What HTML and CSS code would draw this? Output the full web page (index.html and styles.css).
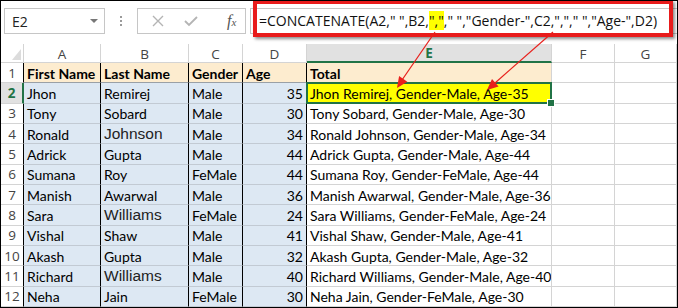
FILE: index.html
```html
<!DOCTYPE html>
<html lang="en">
<head>
    <meta charset="UTF-8">
    <title>CONCATENATE example</title>
    <link rel="stylesheet" href="styles.css">
</head>
<body>
    <div class="window">
        <div class="formula-bar">
            <div class="name-box">
                <span>E2</span>
                <span class="caret"></span>
            </div>
            <div class="grip"><i></i><i></i><i></i></div>
            <div class="fx-box">
                <svg class="ico" width="12" height="12" viewBox="0 0 12 12"><path d="M1 1 L11 11 M11 1 L1 11" stroke="#b4b4b4" stroke-width="1.4" fill="none"/></svg>
                <svg class="ico" width="14" height="12" viewBox="0 0 14 12"><path d="M1 6 L5 10 L13 2" stroke="#b4b4b4" stroke-width="1.8" fill="none"/></svg>
                <span class="fx">f<sub>x</sub></span>
            </div>
            <div class="formula-input">=CONCATENATE(A2," ",B2,<mark>","</mark>," ","Gender-",C2,","," ","Age-",D2)</div>
        </div>

        <div class="sheet">
            <div class="corner"></div>
            <div class="hd">A</div>
            <div class="hd">B</div>
            <div class="hd">C</div>
            <div class="hd">D</div>
            <div class="hd sel">E</div>
            <div class="hd">F</div>
            <div class="hd">G</div>

            <div class="rh">1</div>
            <div class="c h1">First Name</div>
            <div class="c h1">Last Name</div>
            <div class="c h1">Gender</div>
            <div class="c h1">Age</div>
            <div class="t h1">Total</div>
            <div class="e"></div>
            <div class="e"></div>

            <div class="rh sel">2</div>
            <div class="c">Jhon</div>
            <div class="c">Remirej</div>
            <div class="c">Male</div>
            <div class="c num">35</div>
            <div class="t active">Jhon Remirej, Gender-Male, Age-35</div>
            <div class="e"></div>
            <div class="e"></div>

            <div class="rh">3</div>
            <div class="c">Tony</div>
            <div class="c">Sobard</div>
            <div class="c">Male</div>
            <div class="c num">30</div>
            <div class="t">Tony Sobard, Gender-Male, Age-30</div>
            <div class="e"></div>
            <div class="e"></div>

            <div class="rh">4</div>
            <div class="c">Ronald</div>
            <div class="c arial">Johnson</div>
            <div class="c">Male</div>
            <div class="c num">34</div>
            <div class="t">Ronald Johnson, Gender-Male, Age-34</div>
            <div class="e"></div>
            <div class="e"></div>

            <div class="rh">5</div>
            <div class="c">Adrick</div>
            <div class="c">Gupta</div>
            <div class="c">Male</div>
            <div class="c num">44</div>
            <div class="t">Adrick Gupta, Gender-Male, Age-44</div>
            <div class="e"></div>
            <div class="e"></div>

            <div class="rh">6</div>
            <div class="c">Sumana</div>
            <div class="c">Roy</div>
            <div class="c">FeMale</div>
            <div class="c num">44</div>
            <div class="t">Sumana Roy, Gender-FeMale, Age-44</div>
            <div class="e"></div>
            <div class="e"></div>

            <div class="rh">7</div>
            <div class="c">Manish</div>
            <div class="c">Awarwal</div>
            <div class="c">Male</div>
            <div class="c num">36</div>
            <div class="t">Manish Awarwal, Gender-Male, Age-36</div>
            <div class="e"></div>
            <div class="e"></div>

            <div class="rh">8</div>
            <div class="c">Sara</div>
            <div class="c arial">Williams</div>
            <div class="c">FeMale</div>
            <div class="c num">24</div>
            <div class="t">Sara Williams, Gender-FeMale, Age-24</div>
            <div class="e"></div>
            <div class="e"></div>

            <div class="rh">9</div>
            <div class="c">Vishal</div>
            <div class="c">Shaw</div>
            <div class="c">Male</div>
            <div class="c num">41</div>
            <div class="t">Vishal Shaw, Gender-Male, Age-41</div>
            <div class="e"></div>
            <div class="e"></div>

            <div class="rh">10</div>
            <div class="c">Akash</div>
            <div class="c">Gupta</div>
            <div class="c">Male</div>
            <div class="c num">32</div>
            <div class="t">Akash Gupta, Gender-Male, Age-32</div>
            <div class="e"></div>
            <div class="e"></div>

            <div class="rh">11</div>
            <div class="c">Richard</div>
            <div class="c arial">Williams</div>
            <div class="c">Male</div>
            <div class="c num">40</div>
            <div class="t">Richard Williams, Gender-Male, Age-40</div>
            <div class="e"></div>
            <div class="e"></div>

            <div class="rh">12</div>
            <div class="c">Neha</div>
            <div class="c">Jain</div>
            <div class="c">FeMale</div>
            <div class="c num">30</div>
            <div class="t">Neha Jain, Gender-FeMale, Age-30</div>
            <div class="e"></div>
            <div class="e"></div>
        </div>

        <!-- annotation: red box round the formula and arrows to the result -->
        <div class="callout"></div>
        <svg class="arrows" width="678" height="308" viewBox="0 0 678 308">
            <line x1="435" y1="32" x2="402" y2="80" stroke="#e8201c" stroke-width="1.2"/>
            <polygon points="397,88 407.3,81.7 399.1,76.1" fill="#e8201c"/>
            <line x1="553" y1="32" x2="495" y2="83" stroke="#e8201c" stroke-width="1.2"/>
            <polygon points="487,90 498.6,86.5 492,79" fill="#e8201c"/>
        </svg>
    </div>
</body>
</html>
```

FILE: styles.css
```css
* {
    box-sizing: border-box;
}
body {
    margin: 0;
    background: #fff;
}
.window {
    position: relative;
    width: 678px;
    height: 308px;
    border: 1px solid #000;
    overflow: hidden;
    background: #fff;
}
.formula-bar {
    height: 43px;
    display: flex;
    align-items: flex-start;
    padding: 7px 0 0 3px;
    font-family: "Open Sans", sans-serif;
}
.name-box {
    width: 101px;
    height: 26px;
    border: 1px solid #c6c6c6;
    display: flex;
    align-items: center;
    justify-content: space-between;
    padding: 0 6px 0 7px;
    font-size: 14px;
    color: #222;
}
.caret {
    width: 0;
    height: 0;
    border-left: 4px solid transparent;
    border-right: 4px solid transparent;
    border-top: 4px solid #777;
}
.grip {
    width: 32px;
    height: 26px;
    display: flex;
    flex-direction: column;
    align-items: center;
    justify-content: center;
    gap: 2px;
}
.grip i {
    width: 2px;
    height: 2px;
    background: #9a9a9a;
}
.fx-box {
    width: 109px;
    height: 26px;
    border: 1px solid #c6c6c6;
    display: flex;
    align-items: center;
    padding-left: 14px;
    gap: 20px;
}
.fx {
    font-family: "Liberation Serif", serif;
    font-style: italic;
    font-size: 16px;
    color: #555;
    margin-left: 9px;
}
.fx sub {
    font-size: 11px;
    vertical-align: 0;
}
.formula-input {
    flex: 1;
    margin-left: 4px;
    height: 26px;
    border: 1px solid #c6c6c6;
    border-right: none;
    padding-left: 8px;
    font-size: 14px;
    line-height: 24px;
    color: #111;
    white-space: nowrap;
}
.formula-input mark {
    background: #ffff00;
    color: #111;
}

.sheet {
    display: grid;
    grid-template-columns: 23px 77px 88px 54px 64px 245px 63px 62px;
    grid-template-rows: 19px repeat(12, 1fr);
    height: 263px;
    font-family: "Lato", sans-serif;
    font-size: 14px;
    color: #000;
}
.sheet > div {
    display: flex;
    align-items: center;
    white-space: nowrap;
    overflow: hidden;
    border-bottom: 1px solid #d4d4d4;
    border-right: 1px solid #d4d4d4;
}
.corner {
    position: relative;
}
.corner::after {
    content: "";
    position: absolute;
    right: 2px;
    bottom: 2px;
    width: 0;
    height: 0;
    border-left: 9px solid transparent;
    border-bottom: 11px solid #dcdcdc;
}
.hd {
    justify-content: center;
    font-family: "Open Sans", sans-serif;
    font-size: 13.5px;
    color: #444;
    padding-top: 1px;
}
.hd.sel {
    background: #e1e1e1;
    color: #217346;
    font-weight: bold;
    border-bottom: 2px solid #217346;
}
.sheet > .rh {
    justify-content: center;
    font-family: "Open Sans", sans-serif;
    font-size: 13.5px;
    color: #444;
    border-right: 1px solid #000;
}
.sheet > .rh.sel {
    background: #e1e1e1;
    color: #217346;
    font-weight: bold;
    border-right: 2px solid #217346;
}
.sheet > .c {
    background: #dde8f3;
    border-right: 1px solid #000;
    border-bottom: 1px solid #c2cad3;
    padding: 1px 3px 0;
}
.sheet > .h1 {
    background: #fdeccf;
    font-weight: bold;
    border-bottom: 1px solid #9aa0a6;
}
.num {
    justify-content: flex-end;
}
.arial {
    font-family: "Liberation Sans", sans-serif;
    font-size: 15.5px;
    color: #222;
}
.t {
    padding: 1px 3px 0;
}
.t.active {
    position: relative;
    background: #ffff00;
    overflow: visible;
}
.t.active::after {
    content: "";
    position: absolute;
    left: -1px;
    top: -1px;
    right: -1px;
    bottom: -1px;
    border: 2px solid #217346;
}
.t.active::before {
    content: "";
    position: absolute;
    right: -4px;
    bottom: -4px;
    width: 6px;
    height: 6px;
    background: #217346;
    border: 1px solid #fff;
    z-index: 1;
}

.callout {
    position: absolute;
    left: 252px;
    top: -1px;
    width: 420px;
    height: 37px;
    border: 4px solid #e81b1b;
    box-shadow: 2px 2px 3px rgba(0, 0, 0, 0.45);
}
.arrows {
    position: absolute;
    left: -1px;
    top: -1px;
}
```
